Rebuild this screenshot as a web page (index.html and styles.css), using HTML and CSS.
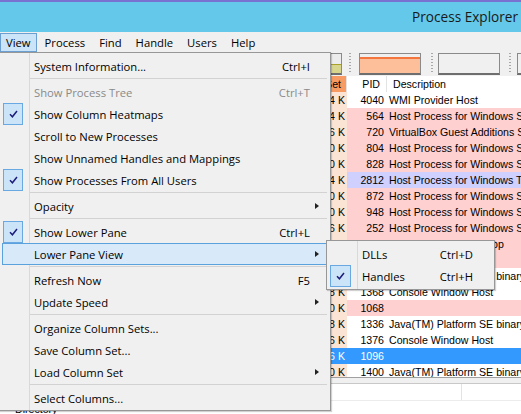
FILE: index.html
```html
<!DOCTYPE html>
<html>
<head>
<meta charset="utf-8">
<link rel="stylesheet" href="styles.css">
</head>
<body>
<div class="window">
  <div class="titlebar"><span class="title">Process Explorer</span></div>
  <div class="menubar">
    <span class="mbi open">View</span>
    <span class="mbi">Process</span>
    <span class="mbi">Find</span>
    <span class="mbi">Handle</span>
    <span class="mbi">Users</span>
    <span class="mbi">Help</span>
  </div>
  <div class="toolbar">
    <div class="graph g-cpu"></div>
    <div class="grip"></div>
    <div class="graph g-mem"></div>
    <div class="grip"></div>
    <div class="graph g-io"></div>
    <div class="grip"></div>
    <div class="graph g-net"></div>
  </div>
  <div class="list">
    <div class="row hdr">
      <div class="c-name"></div>
      <div class="c-ws">Working Set</div>
      <div class="c-pid">PID</div>
      <div class="c-desc">Description</div>
    </div>
    <div class="row"><div class="c-name"></div><div class="c-ws">19,724 K</div><div class="c-pid">4040</div><div class="c-desc">WMI Provider Host</div></div>
    <div class="row svc"><div class="c-name"></div><div class="c-ws">9,364 K</div><div class="c-pid">564</div><div class="c-desc">Host Process for Windows Services</div></div>
    <div class="row svc"><div class="c-name"></div><div class="c-ws">5,116 K</div><div class="c-pid">720</div><div class="c-desc">VirtualBox Guest Additions Service</div></div>
    <div class="row svc"><div class="c-name"></div><div class="c-ws">15,660 K</div><div class="c-pid">804</div><div class="c-desc">Host Process for Windows Services</div></div>
    <div class="row svc"><div class="c-name"></div><div class="c-ws">43,280 K</div><div class="c-pid">828</div><div class="c-desc">Host Process for Windows Services</div></div>
    <div class="row own"><div class="c-name"></div><div class="c-ws">5,044 K</div><div class="c-pid">2812</div><div class="c-desc">Host Process for Windows Tasks</div></div>
    <div class="row svc"><div class="c-name"></div><div class="c-ws">12,880 K</div><div class="c-pid">872</div><div class="c-desc">Host Process for Windows Services</div></div>
    <div class="row svc"><div class="c-name"></div><div class="c-ws">22,300 K</div><div class="c-pid">948</div><div class="c-desc">Host Process for Windows Services</div></div>
    <div class="row svc"><div class="c-name"></div><div class="c-ws">14,116 K</div><div class="c-pid">252</div><div class="c-desc">Host Process for Windows Services</div></div>
    <div class="row svc"><div class="c-name"></div><div class="c-ws">6,620 K</div><div class="c-pid">484</div><div class="c-desc">Spooler SubSystem App</div></div>
    <div class="row svc"><div class="c-name"></div><div class="c-ws">4,352 K</div><div class="c-pid"></div><div class="c-desc"></div></div>
    <div class="row"><div class="c-name"></div><div class="c-ws">38,208 K</div><div class="c-pid">1360</div><div class="c-desc">Java(TM) Platform SE binary</div></div>
    <div class="row"><div class="c-name"></div><div class="c-ws">2,768 K</div><div class="c-pid">1368</div><div class="c-desc">Console Window Host</div></div>
    <div class="row svc"><div class="c-name"></div><div class="c-ws">1,920 K</div><div class="c-pid">1068</div><div class="c-desc"></div></div>
    <div class="row"><div class="c-name"></div><div class="c-ws">41,288 K</div><div class="c-pid">1336</div><div class="c-desc">Java(TM) Platform SE binary</div></div>
    <div class="row"><div class="c-name"></div><div class="c-ws">2,756 K</div><div class="c-pid">1376</div><div class="c-desc">Console Window Host</div></div>
    <div class="row sel"><div class="c-name"></div><div class="c-ws">3,516 K</div><div class="c-pid">1096</div><div class="c-desc"></div></div>
    <div class="row"><div class="c-name"></div><div class="c-ws">40,960 K</div><div class="c-pid">1400</div><div class="c-desc">Java(TM) Platform SE binary</div></div>
  </div>
  <div class="splitter"></div>
  <div class="lower">
    <div class="lhdr"><div class="l-type"></div><div class="l-name"></div></div>
    <div class="lrow"><div class="l-type">Directory</div><div class="l-name"></div></div>
  </div>

  <div class="menu">
    <div class="mi">System Information...<span class="key">Ctrl+I</span></div>
    <div class="sep"></div>
    <div class="mi dis">Show Process Tree<span class="key">Ctrl+T</span></div>
    <div class="mi"><span class="chk"><svg width="9" height="8" viewBox="0 0 9 8"><path d="M1 4.3 L3.4 6.8 L8 1" fill="none" stroke="#1d1d7c" stroke-width="1.5"/></svg></span>Show Column Heatmaps</div>
    <div class="mi">Scroll to New Processes</div>
    <div class="mi">Show Unnamed Handles and Mappings</div>
    <div class="mi"><span class="chk"><svg width="9" height="8" viewBox="0 0 9 8"><path d="M1 4.3 L3.4 6.8 L8 1" fill="none" stroke="#1d1d7c" stroke-width="1.5"/></svg></span>Show Processes From All Users</div>
    <div class="sep"></div>
    <div class="mi">Opacity<span class="arrow"></span></div>
    <div class="sep"></div>
    <div class="mi"><span class="chk"><svg width="9" height="8" viewBox="0 0 9 8"><path d="M1 4.3 L3.4 6.8 L8 1" fill="none" stroke="#1d1d7c" stroke-width="1.5"/></svg></span>Show Lower Pane<span class="key">Ctrl+L</span></div>
    <div class="mi hot">Lower Pane View<span class="arrow"></span></div>
    <div class="sep"></div>
    <div class="mi">Refresh Now<span class="key">F5</span></div>
    <div class="mi">Update Speed<span class="arrow"></span></div>
    <div class="sep"></div>
    <div class="mi">Organize Column Sets...</div>
    <div class="mi">Save Column Set...</div>
    <div class="mi">Load Column Set<span class="arrow"></span></div>
    <div class="sep"></div>
    <div class="mi">Select Columns...</div>
  </div>

  <div class="menu submenu">
    <div class="mi">DLLs<span class="key">Ctrl+D</span></div>
    <div class="mi"><span class="chk"><svg width="9" height="8" viewBox="0 0 9 8"><path d="M1 4.3 L3.4 6.8 L8 1" fill="none" stroke="#1d1d7c" stroke-width="1.5"/></svg></span>Handles<span class="key">Ctrl+H</span></div>
  </div>
</div>
</body>
</html>
```

FILE: styles.css
```css
* { box-sizing: border-box; }
html, body { margin: 0; padding: 0; }
body {
  width: 521px;
  height: 414px;
  overflow: hidden;
  background: #fff;
  font-family: "Open Sans", "Liberation Sans", sans-serif;
  font-size: 11.25px;
  color: #000;
}
.window {
  position: relative;
  width: 521px;
  height: 414px;
  overflow: hidden;
  background: #fff;
}

/* title bar */
.titlebar {
  height: 32px;
  border-top: 2px solid #7a70d2;
  background: #63c8e9;
  display: flex;
  justify-content: flex-end;
  padding-right: 3px;
}
.title {
  font-size: 13.6px;
  line-height: 30px;
  color: #1a1a1a;
}

/* menu bar */
.menubar {
  height: 20px;
  background: #f0f0f0;
  display: flex;
  gap: 2px;
  padding-top: 1px;
}
.mbi {
  height: 19px;
  line-height: 17px;
  padding: 0 5px;
  border: 1px solid transparent;
  white-space: nowrap;
}
.mbi.open {
  background: #cce4f7;
  border-color: #6b9fd2;
}

/* toolbar */
.toolbar {
  height: 24px;
  background: #f0f0f0;
  display: flex;
  align-items: flex-start;
  padding-top: 1px;
}
.graph {
  flex: none;
  width: 62px;
  height: 22px;
  border: 1px solid #8a8a8a;
  border-bottom: 2px solid #6e6e6e;
  background: #f0f0f0;
}
.g-cpu {
  margin-left: 280px;
  background: linear-gradient(to bottom, #ececec 0 10px, #a9a02c 10px 11px, #d8d68c 11px);
}
.g-mem {
  margin-left: 8px;
  background: linear-gradient(to bottom, #efefef 0 3px, #f2763e 3px 5px, #fdbf9a 5px);
}
.g-io { margin-left: 5px; }
.g-net { margin-left: 6px; }
.grip {
  flex: none;
  width: 2px;
  height: 21px;
  margin-left: 7px;
  background: repeating-linear-gradient(to bottom, #a8a8a8 0 1px, transparent 1px 3px);
}
.g-mem + .grip { margin-left: 10px; }
.g-io + .grip { margin-left: 9px; }

/* process list */
.list {
  height: 302px;
  border-bottom: 1px solid #a0a0a0;
  overflow: hidden;
  background: #fff;
  font-family: "Liberation Sans", Arial, sans-serif;
  font-size: 10.6px;
}
.row {
  display: flex;
  height: 16px;
  line-height: 16px;
  white-space: nowrap;
}
.row > div { flex: none; overflow: hidden; }
.c-name { width: 270px; }
.c-ws {
  width: 77px;
  text-align: right;
  padding-right: 2px;
  background: #fce4d5;
}
.c-pid {
  width: 40px;
  text-align: right;
  padding-right: 3px;
}
.row > .c-desc { flex: 1; padding-left: 2px; }
.row.svc .c-pid, .row.svc .c-desc { background: #ffd0d0; }
.row.own .c-pid, .row.own .c-desc { background: #d0d0ff; }
.row.sel > div { background: #3399ff; color: #fff; }

.row.hdr { background: #fff; }
.hdr > div { border-right: 1px solid #e3e3e3; }
.hdr .c-ws { background: #f89b62; padding-right: 5px; }
.hdr .c-pid { padding-right: 6px; }
.hdr > .c-desc { padding-left: 6px; border-right: 0; }

/* splitter + lower pane */
.splitter {
  height: 5px;
  background: #f0f0f0;
}
.lower {
  border-top: 1px solid #c8c8c8;
  background: #fff;
  font-family: "Liberation Sans", Arial, sans-serif;
  font-size: 10.6px;
}
.lhdr, .lrow {
  display: flex;
  white-space: nowrap;
}
.lhdr { height: 17px; border-bottom: 1px solid #ececec; }
.lhdr .l-type { width: 462px; border-right: 1px solid #e3e3e3; }
.lrow { height: 16px; line-height: 16px; }
.lrow .l-type { width: 462px; padding-left: 15px; }

/* drop-down menus */
.menu {
  position: absolute;
  left: -1px;
  top: 52px;
  width: 332px;
  background: #f0f0f0;
  border: 1px solid #979797;
  padding: 2px 2px 1px 2px;
  box-shadow: 1px 1px 1px rgba(0, 0, 0, 0.18);
  z-index: 5;
}
.menu::before {
  content: "";
  position: absolute;
  left: 29px;
  top: 0;
  bottom: 0;
  width: 1px;
  background: #d9d9d9;
}
.mi {
  position: relative;
  z-index: 1;
  height: 22px;
  display: flex;
  align-items: center;
  padding-left: 32px;
  padding-right: 9px;
  white-space: nowrap;
}
.mi.dis { color: #8a8a8a; }
.mi.hot {
  background: #d8e9fa;
  box-shadow: inset 0 0 0 1px #5aa2de;
}
.key {
  margin-left: auto;
  margin-right: 9px;
}
.arrow {
  margin-left: auto;
  width: 0;
  height: 0;
  border-left: 4px solid #222;
  border-top: 3.5px solid transparent;
  border-bottom: 3.5px solid transparent;
}
.chk {
  position: absolute;
  left: 1px;
  top: 0;
  width: 20px;
  height: 22px;
  border: 1px solid #69a8e0;
  background: #cce4f7;
  display: flex;
  align-items: center;
  justify-content: center;
}
.sep {
  position: relative;
  height: 4px;
  margin-left: 28px;
  margin-right: 1px;
}
.sep::after {
  content: "";
  position: absolute;
  left: 0;
  right: 0;
  top: 1px;
  height: 1px;
  background: #d2d2d2;
}

.submenu {
  left: 326px;
  top: 240px;
  width: 169px;
  padding: 2px 2px 2px 3px;
  z-index: 6;
}
.submenu::before { left: 30px; }
.submenu .mi { padding-right: 10px; }
.submenu .chk { left: 0; width: 21px; }
```
